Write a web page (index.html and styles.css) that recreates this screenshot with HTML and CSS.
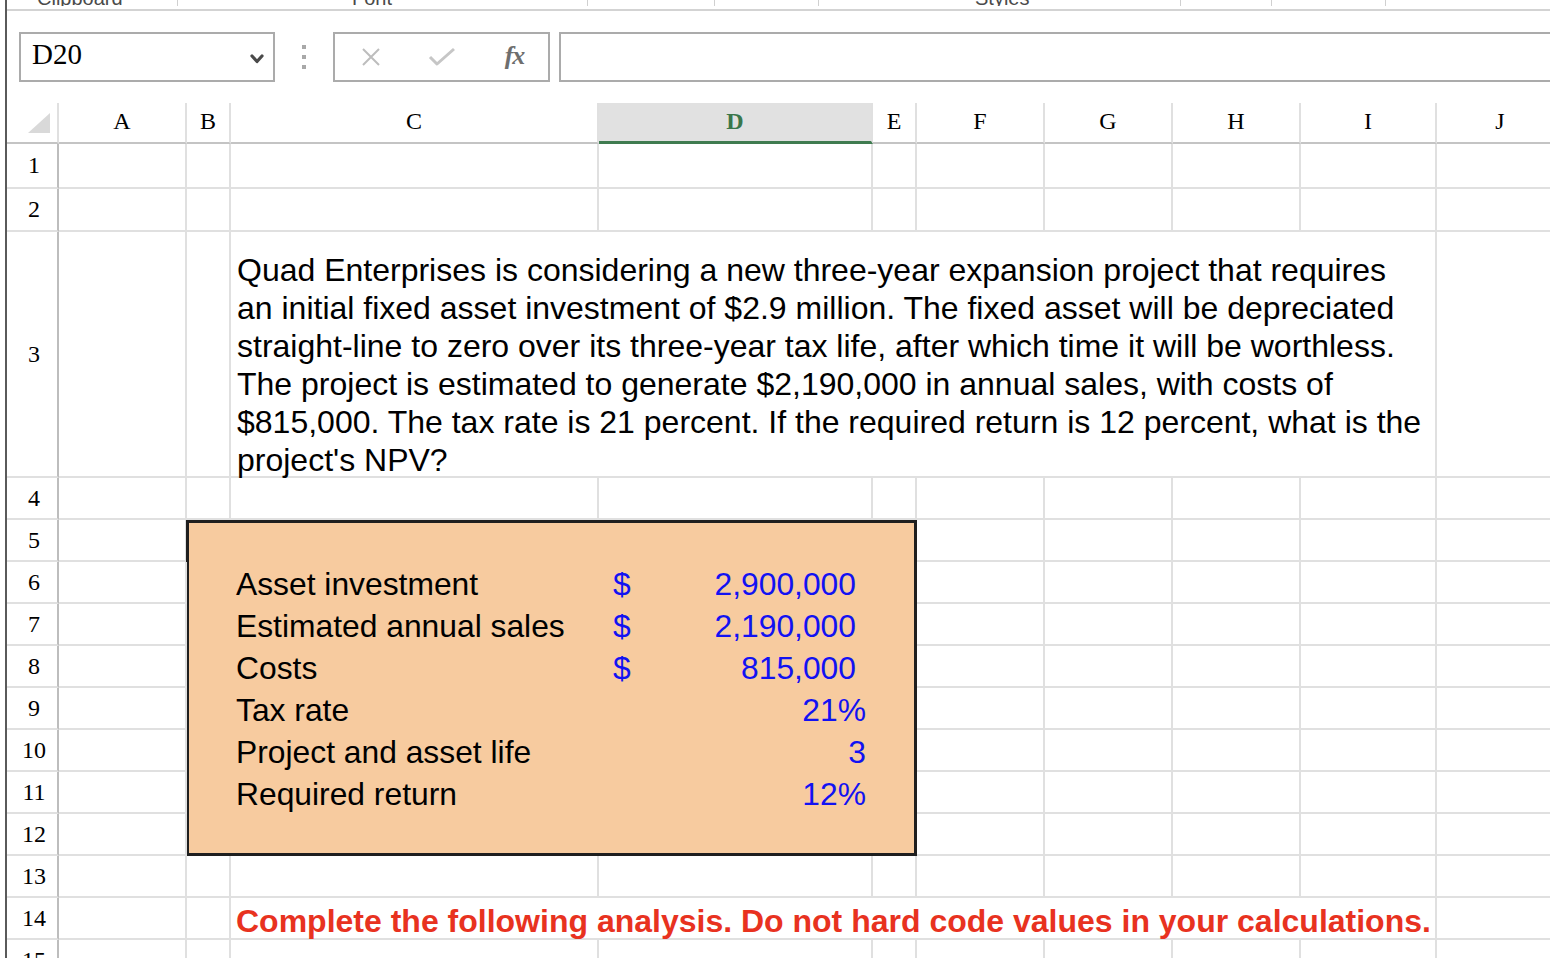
FILE: index.html
```html
<!DOCTYPE html>
<html lang="en">
<head>
<meta charset="utf-8">
<title>Quad Enterprises NPV</title>
<link rel="stylesheet" href="styles.css">
</head>
<body>
<div class="frame">
  <div class="ribbon">
    <div class="seg s1"><span class="rlabel">Clipboard</span></div>
    <div class="seg s2"><span class="rlabel">Font</span></div>
    <div class="seg s3"></div>
    <div class="seg s4"></div>
    <div class="seg s5"><span class="rlabel">Styles</span></div>
    <div class="seg s6"></div>
    <div class="seg s7"></div>
    <div class="seg s8"></div>
  </div>

  <div class="fbar">
    <div class="namebox">
      <span class="cellref">D20</span>
      <svg class="chev" width="14" height="10" viewBox="0 0 14 10"><polyline points="2,2 7,7.5 12,2" fill="none" stroke="#4a4a4a" stroke-width="3.2" stroke-linecap="round" stroke-linejoin="round"/></svg>
    </div>
    <div class="vdots">
      <svg width="4" height="24" viewBox="0 0 4 24"><rect x="0" y="0" width="4" height="4" fill="#a8a8a8"/><rect x="0" y="10" width="4" height="4" fill="#a8a8a8"/><rect x="0" y="20" width="4" height="4" fill="#a8a8a8"/></svg>
    </div>
    <div class="fbtns">
      <div class="fbtn"><svg width="20" height="20" viewBox="0 0 20 20"><path d="M2 2 L18 18 M18 2 L2 18" stroke="#bdbdbd" stroke-width="2" fill="none"/></svg></div>
      <div class="fbtn"><svg width="28" height="20" viewBox="0 0 28 20"><path d="M2 10 L9 17 L26 2" stroke="#c6c6c6" stroke-width="3" fill="none" stroke-linejoin="round"/></svg></div>
      <div class="fbtn fx">fx</div>
    </div>
    <div class="finput"></div>
  </div>

  <div class="sheet">
    <!-- header -->
    <div class="corner"><svg width="50" height="39" viewBox="0 0 50 39"><polygon points="21,30 43,30 43,10" fill="#d9d9d9"/></svg></div>
    <div class="ch">A</div><div class="ch">B</div><div class="ch">C</div><div class="ch sel">D</div><div class="ch">E</div><div class="ch">F</div><div class="ch">G</div><div class="ch">H</div><div class="ch">I</div><div class="ch">J</div>

    <!-- row 1 -->
    <div class="rh">1</div><div class="c"></div><div class="c"></div><div class="c"></div><div class="c"></div><div class="c"></div><div class="c"></div><div class="c"></div><div class="c"></div><div class="c"></div><div class="c"></div>
    <!-- row 2 -->
    <div class="rh">2</div><div class="c"></div><div class="c"></div><div class="c"></div><div class="c"></div><div class="c"></div><div class="c"></div><div class="c"></div><div class="c"></div><div class="c"></div><div class="c"></div>
    <!-- row 3 -->
    <div class="rh">3</div><div class="c"></div><div class="c"></div>
    <div class="c para span7"><div class="ptext">Quad Enterprises is considering a new three-year expansion project that requires<br>an initial fixed asset investment of $2.9 million. The fixed asset will be depreciated<br>straight-line to zero over its three-year tax life, after which time it will be worthless.<br>The project is estimated to generate $2,190,000 in annual sales, with costs of<br>$815,000. The tax rate is 21 percent. If the required return is 12 percent, what is the<br>project's NPV?</div></div>
    <div class="c"></div>
    <!-- row 4 -->
    <div class="rh">4</div><div class="c"></div><div class="c"></div><div class="c"></div><div class="c"></div><div class="c"></div><div class="c"></div><div class="c"></div><div class="c"></div><div class="c"></div><div class="c"></div>
    <!-- row 5 -->
    <div class="rh">5</div><div class="c"></div>
    <div class="box">
      <div class="spacer"></div>
      <div class="lbl">Asset investment</div><div class="val cur"><span>$</span><span>2,900,000</span></div>
      <div class="lbl">Estimated annual sales</div><div class="val cur"><span>$</span><span>2,190,000</span></div>
      <div class="lbl">Costs</div><div class="val cur"><span>$</span><span>815,000</span></div>
      <div class="lbl">Tax rate</div><div class="val pct">21%</div>
      <div class="lbl">Project and asset life</div><div class="val pct">3</div>
      <div class="lbl">Required return</div><div class="val pct">12%</div>
    </div>
    <div class="c"></div><div class="c"></div><div class="c"></div><div class="c"></div><div class="c"></div>
    <!-- rows 6-12 -->
    <div class="rh">6</div><div class="c"></div><div class="c"></div><div class="c"></div><div class="c"></div><div class="c"></div><div class="c"></div>
    <div class="rh">7</div><div class="c"></div><div class="c"></div><div class="c"></div><div class="c"></div><div class="c"></div><div class="c"></div>
    <div class="rh">8</div><div class="c"></div><div class="c"></div><div class="c"></div><div class="c"></div><div class="c"></div><div class="c"></div>
    <div class="rh">9</div><div class="c"></div><div class="c"></div><div class="c"></div><div class="c"></div><div class="c"></div><div class="c"></div>
    <div class="rh">10</div><div class="c"></div><div class="c"></div><div class="c"></div><div class="c"></div><div class="c"></div><div class="c"></div>
    <div class="rh">11</div><div class="c"></div><div class="c"></div><div class="c"></div><div class="c"></div><div class="c"></div><div class="c"></div>
    <div class="rh">12</div><div class="c"></div><div class="c"></div><div class="c"></div><div class="c"></div><div class="c"></div><div class="c"></div>
    <!-- row 13 -->
    <div class="rh">13</div><div class="c"></div><div class="c"></div><div class="c"></div><div class="c"></div><div class="c"></div><div class="c"></div><div class="c"></div><div class="c"></div><div class="c"></div><div class="c"></div>
    <!-- row 14 -->
    <div class="rh">14</div><div class="c"></div><div class="c"></div>
    <div class="c note span7"><div class="ntext">Complete the following analysis. Do not hard code values in your calculations.</div></div>
    <div class="c"></div>
    <!-- row 15 -->
    <div class="rh">15</div><div class="c"></div><div class="c"></div><div class="c"></div><div class="c"></div><div class="c"></div><div class="c"></div><div class="c"></div><div class="c"></div><div class="c"></div><div class="c"></div>
  </div>
</div>
</body>
</html>
```
FILE: styles.css
```css
html, body {
  margin: 0;
  padding: 0;
  background: #ffffff;
}
body {
  width: 1550px;
  height: 958px;
  overflow: hidden;
  font-family: "Liberation Sans", Arial, sans-serif;
  color: #000;
}
.frame {
  margin-left: 5px;
  border-left: 2px solid #5a5a5a;
  height: 958px;
  box-sizing: border-box;
}

/* ribbon remnant */
.ribbon {
  display: flex;
  height: 9px;
  border-bottom: 2px solid #d3d3d3;
}
.seg {
  height: 6px;
  overflow: hidden;
  border-right: 1px solid #d0d0d0;
  box-sizing: border-box;
  flex: none;
}
.s1 { width: 171px; padding-left: 30px; }
.s2 { width: 410px; padding-left: 174px; }
.s3 { width: 127px; }
.s4 { width: 104px; }
.s5 { width: 362px; padding-left: 156px; }
.s6 { width: 91px; }
.s7 { width: 114px; }
.s8 { flex: 1; border-right: none; }
.rlabel {
  display: block;
  font-size: 20px;
  line-height: 20px;
  margin-top: -12px;
  color: #4a4a4a;
  white-space: nowrap;
}

/* formula bar */
.fbar {
  display: flex;
  height: 50px;
  margin-top: 21px;
}
.namebox {
  margin-left: 12px;
  width: 256px;
  flex: none;
  box-sizing: border-box;
  border: 2px solid #ababab;
  display: flex;
  align-items: center;
  padding: 0 9px 5px 11px;
  font-family: "Liberation Serif", "Times New Roman", serif;
  font-size: 29px;
}
.chev { margin-left: auto; margin-top: 9px; }
.vdots {
  width: 58px;
  flex: none;
  display: flex;
  align-items: center;
  justify-content: center;
}
.fbtns {
  width: 217px;
  flex: none;
  box-sizing: border-box;
  border: 2px solid #ababab;
  display: grid;
  grid-template-columns: repeat(3, 1fr);
  align-items: center;
  justify-items: center;
}
.fbtn { display: flex; align-items: center; justify-content: center; }
.fx {
  font-family: "Liberation Serif", "Times New Roman", serif;
  font-style: italic;
  font-weight: bold;
  font-size: 26px;
  color: #6e6e6e;
  letter-spacing: -1px;
  padding-left: 4px;
  margin-top: -3px;
}
.finput {
  margin-left: 9px;
  flex: 1;
  box-sizing: border-box;
  border: 2px solid #ababab;
  border-right: none;
}

/* sheet grid */
.sheet {
  margin-top: 21px;
  display: grid;
  grid-template-columns: 52px 128px 44px 368px 274px 44px 128px 128px 128px 136px 128px;
  grid-template-rows: 41px 45px 43px 246px repeat(12, 42px);
}
.sheet > div { box-sizing: border-box; }
.corner {
  border-right: 2px solid #e0e0e0;
  border-bottom: 2px solid #c4c4c4;
}
.corner svg { display: block; }
.ch {
  border-right: 2px solid #e0e0e0;
  border-bottom: 2px solid #c4c4c4;
  display: flex;
  align-items: center;
  justify-content: center;
  font-family: "Liberation Serif", "Times New Roman", serif;
  font-size: 24px;
  padding-bottom: 2px;
}
.ch.sel {
  background: #e1e1e1;
  border-bottom: 3px solid #3f7b50;
  color: #3a774b;
  font-weight: bold;
}
.rh {
  border-right: 2px solid #bdbdbd;
  border-bottom: 2px solid #e0e0e0;
  display: flex;
  align-items: center;
  justify-content: center;
  font-family: "Liberation Serif", "Times New Roman", serif;
  font-size: 24px;
  padding-left: 4px;
}
.c {
  border-right: 2px solid #e0e0e0;
  border-bottom: 2px solid #e0e0e0;
}
.span7 { grid-column: span 7; }
.para {
  display: flex;
  align-items: flex-end;
  padding-left: 6px;
  font-size: 32px;
  line-height: 38px;
  white-space: nowrap;
}
.ptext { margin-bottom: -3px; }
.note {
  display: flex;
  align-items: flex-end;
  padding-left: 5px;
  font-size: 32px;
  line-height: 36px;
  font-weight: bold;
  color: #e8321f;
  white-space: nowrap;
}
.ntext { margin-bottom: -1px; }

/* input box */
.box {
  grid-column: 3 / span 4;
  grid-row: span 8;
  background: #f7cb9f;
  border: 3px solid #1f1f1f;
  margin-left: -1px;
  display: grid;
  grid-template-columns: 42px 368px 274px 41px;
  grid-template-rows: 39px repeat(6, 42px) 39px;
  font-size: 31.8px;
  line-height: 36px;
}
.spacer { grid-column: 1 / -1; }
.lbl {
  grid-column: 2;
  display: flex;
  align-items: flex-end;
  padding: 0 0 2px 5px;
  white-space: nowrap;
}
.val {
  grid-column: 3;
  display: flex;
  align-items: flex-end;
  padding-bottom: 2px;
  color: #1212f2;
  white-space: nowrap;
}
.val.cur {
  justify-content: space-between;
  padding-left: 14px;
  padding-right: 17px;
}
.val.pct {
  justify-content: flex-end;
  padding-right: 7px;
}
```
